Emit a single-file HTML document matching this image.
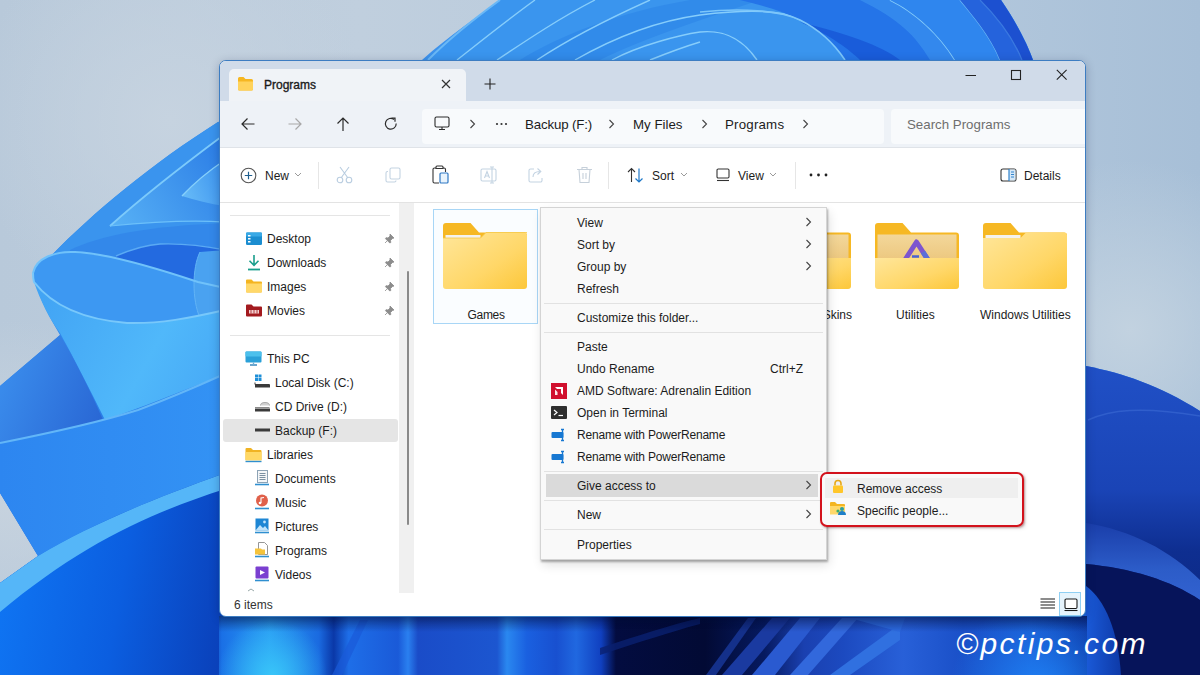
<!DOCTYPE html>
<html><head><meta charset="utf-8">
<style>
*{margin:0;padding:0;box-sizing:border-box}
html,body{width:1200px;height:675px;overflow:hidden;background:#b9cadb}
body{position:relative;font-family:"Liberation Sans",sans-serif;font-size:12px;color:#1c1c1c}
#bg{position:absolute;left:0;top:0;width:1200px;height:675px}
.b{position:absolute}
.t{position:absolute;white-space:nowrap;line-height:14px;font-size:12px}
.t13{position:absolute;white-space:nowrap;line-height:16px;font-size:13.3px}
svg.i{position:absolute;overflow:visible}
</style></head><body>
<!--BG-->
<svg id="bg" width="1200" height="675" viewBox="0 0 1200 675">
 <defs>
  <linearGradient id="gbg" x1="0" y1="0" x2="1200" y2="0" gradientUnits="userSpaceOnUse">
   <stop offset="0" stop-color="#b8c9da"/><stop offset="0.3" stop-color="#c0cfde"/><stop offset="0.8" stop-color="#b2c7dc"/><stop offset="1" stop-color="#a7bfd7"/>
  </linearGradient>
  <linearGradient id="gbase" x1="0" y1="0" x2="0" y2="675" gradientUnits="userSpaceOnUse">
   <stop offset="0" stop-color="#3f94ec"/><stop offset="0.5" stop-color="#3088ec"/><stop offset="1" stop-color="#1a5fd8"/>
  </linearGradient>
  <linearGradient id="gcupOut" x1="40" y1="300" x2="220" y2="400" gradientUnits="userSpaceOnUse">
   <stop offset="0" stop-color="#42a4f4"/><stop offset="0.6" stop-color="#50b8fa"/><stop offset="1" stop-color="#46a8f6"/>
  </linearGradient>
  <linearGradient id="gpetB" x1="0" y1="380" x2="120" y2="430" gradientUnits="userSpaceOnUse">
   <stop offset="0" stop-color="#3a8cec"/><stop offset="1" stop-color="#2660d0"/>
  </linearGradient>
  <linearGradient id="gbandC" x1="0" y1="450" x2="220" y2="450" gradientUnits="userSpaceOnUse">
   <stop offset="0" stop-color="#2d86f0"/><stop offset="1" stop-color="#3392f4"/>
  </linearGradient>
  <linearGradient id="gD" x1="0" y1="600" x2="230" y2="640" gradientUnits="userSpaceOnUse">
   <stop offset="0" stop-color="#0f74f2"/><stop offset="0.5" stop-color="#0b5ee0"/><stop offset="1" stop-color="#0a3fb8"/>
  </linearGradient>
  <linearGradient id="gright" x1="0" y1="366" x2="0" y2="675" gradientUnits="userSpaceOnUse">
   <stop offset="0" stop-color="#2050c6"/><stop offset="0.4" stop-color="#1a44b6"/><stop offset="0.6" stop-color="#0e2e90"/><stop offset="1" stop-color="#0a2478"/>
  </linearGradient>
  <linearGradient id="gbot" x1="210" y1="0" x2="1200" y2="0" gradientUnits="userSpaceOnUse">
   <stop offset="0" stop-color="#0a3ab0"/>
   <stop offset="0.012" stop-color="#1a70e6"/>
   <stop offset="0.06" stop-color="#2a9cf4"/>
   <stop offset="0.11" stop-color="#1a6ae0"/>
   <stop offset="0.125" stop-color="#0a38a8"/>
   <stop offset="0.14" stop-color="#1e6ee8"/>
   <stop offset="0.19" stop-color="#1a5ad8"/>
   <stop offset="0.2" stop-color="#2a80f0"/>
   <stop offset="0.21" stop-color="#1a4cc8"/>
   <stop offset="0.29" stop-color="#1c56d0"/>
   <stop offset="0.30" stop-color="#2a88f0"/>
   <stop offset="0.32" stop-color="#1a60e0"/>
   <stop offset="0.35" stop-color="#1850d0"/>
   <stop offset="0.37" stop-color="#2068e0"/>
   <stop offset="0.395" stop-color="#1040c0"/>
   <stop offset="0.41" stop-color="#030c40"/>
   <stop offset="0.5" stop-color="#020a34"/>
   <stop offset="0.56" stop-color="#061a60"/>
   <stop offset="0.6" stop-color="#1a40b0"/>
   <stop offset="0.64" stop-color="#1c4ac0"/>
   <stop offset="0.7" stop-color="#2860d8"/>
   <stop offset="0.76" stop-color="#1a50c8"/>
   <stop offset="0.83" stop-color="#1a55cc"/>
   <stop offset="0.88" stop-color="#0e3aa8"/>
   <stop offset="0.92" stop-color="#0a2a8a"/>
   <stop offset="1" stop-color="#0a2270"/>
  </linearGradient>
  <radialGradient id="gbotGlow" cx="272" cy="675" r="55" gradientUnits="userSpaceOnUse">
   <stop offset="0" stop-color="#38c4f8"/><stop offset="1" stop-color="#38c4f8" stop-opacity="0"/>
  </radialGradient>
  <linearGradient id="gshadow" x1="0" y1="616" x2="0" y2="632" gradientUnits="userSpaceOnUse">
   <stop offset="0" stop-color="#000830" stop-opacity="0.45"/><stop offset="1" stop-color="#000830" stop-opacity="0"/>
  </linearGradient>
  <radialGradient id="gspotR" cx="1130" cy="330" r="170" gradientUnits="userSpaceOnUse">
   <stop offset="0" stop-color="#c2d2e0"/><stop offset="1" stop-color="#c2d2e0" stop-opacity="0"/>
  </radialGradient>
  <radialGradient id="gspotL" cx="170" cy="120" r="200" gradientUnits="userSpaceOnUse">
   <stop offset="0" stop-color="#c6d3e0"/><stop offset="1" stop-color="#c6d3e0" stop-opacity="0"/>
  </radialGradient>
  <linearGradient id="gband" x1="0" y1="523" x2="0" y2="600" gradientUnits="userSpaceOnUse">
   <stop offset="0" stop-color="#1a3eaa"/><stop offset="0.6" stop-color="#2c5cc8"/><stop offset="1" stop-color="#3262d0"/>
  </linearGradient>
  <linearGradient id="gpetR" x1="1086" y1="0" x2="1121" y2="0" gradientUnits="userSpaceOnUse">
   <stop offset="0" stop-color="#1a5ad8"/><stop offset="1" stop-color="#0e3aa8"/>
  </linearGradient>
  <radialGradient id="gwmGlow" cx="1040" cy="690" r="90" gradientUnits="userSpaceOnUse">
   <stop offset="0" stop-color="#1e80f4"/><stop offset="1" stop-color="#1e80f4" stop-opacity="0"/>
  </radialGradient>
  <linearGradient id="gPa" x1="110" y1="226" x2="225" y2="150" gradientUnits="userSpaceOnUse">
   <stop offset="0" stop-color="#58b2f6"/><stop offset="1" stop-color="#2c7ee6"/>
  </linearGradient>
  <linearGradient id="gPb" x1="182" y1="196" x2="225" y2="180" gradientUnits="userSpaceOnUse">
   <stop offset="0" stop-color="#68bcf8"/><stop offset="1" stop-color="#3d94ee"/>
  </linearGradient>
  <radialGradient id="gspotLL" cx="10" cy="480" r="160" gradientUnits="userSpaceOnUse">
   <stop offset="0" stop-color="#c9d4df"/><stop offset="1" stop-color="#c9d4df" stop-opacity="0"/>
  </radialGradient>
 </defs>
 <rect width="1200" height="675" fill="url(#gbg)"/>
 <rect width="1200" height="675" fill="url(#gspotR)"/>
 <rect width="1200" height="675" fill="url(#gspotL)"/>
 <rect width="1200" height="675" fill="url(#gspotLL)"/>
 <!-- main bloom -->
 <path d="M500 0 L1001 0 C1015 20 1028 45 1033 60 L1086 366 C1122 373 1159 385 1200 411 L1200 675 L0 675 L0 583 L38 556 L0 493 L0 386 L60 335 C45 310 36 290 34 275 C38 265 44 262 47 260 C90 215 150 165 218 122 C300 90 380 75 422 60 C450 35 480 15 500 0 Z" fill="url(#gbase)"/>
 <!-- top-left petal tips -->
 <path d="M47 260 C90 215 150 165 218 122 L225 122 L225 260 Z" fill="#3a94ee"/>
 <path d="M110 226 C150 190 190 160 225 134 L225 222 C190 220 150 222 110 226 Z" fill="url(#gPa)"/>
 <path d="M110 226 C150 190 190 160 225 134" fill="none" stroke="#7ccafb" stroke-width="1.8"/>
 <path d="M110 226 C150 222 190 220 225 222" fill="none" stroke="#6cc0fa" stroke-width="1.2"/>
 <path d="M182 196 C195 182 210 170 225 160 L225 206 C210 204 195 200 182 196 Z" fill="url(#gPb)"/>
 <path d="M182 196 C195 182 210 170 225 160" fill="none" stroke="#86d0fb" stroke-width="1.4"/>
 <path d="M70 250 C100 235 150 226 225 223 L225 290 L70 290 Z" fill="#3388ea"/>
 <path d="M116 256 C130 250 145 245 160 244 C185 243 205 246 225 250 L225 290 L116 290 Z" fill="#236ae0"/>
 <path d="M116 256 C130 250 145 245 160 244 C185 243 205 246 225 250" fill="none" stroke="#5aaaf4" stroke-width="1.4"/>
 <!-- cup petal: inside -->
 <path d="M33 273 C36 258 55 251 75 252 C105 253 150 266 198 282 L225 288 L225 312 C190 319 150 324 127 323 C90 320 55 309 34 282 Z" fill="#3d98f2"/>
 <path d="M200 252 C192 268 192 300 200 318 L225 312 L225 250 Z" fill="#4aa2f0"/>
 <path d="M200 252 C192 268 192 300 200 318" fill="none" stroke="#62b4f6" stroke-width="1"/>
 <!-- cup outside -->
 <path d="M34 282 C55 309 90 320 127 323 C160 324 190 318 225 310 L225 374 C180 392 140 408 105 420 C90 390 75 360 60 333 C50 320 40 300 34 282 Z" fill="url(#gcupOut)"/>
 <path d="M33 273 C36 258 55 251 75 252 C105 253 150 266 198 282 L225 288" fill="none" stroke="#70c2fa" stroke-width="2"/>
 <path d="M33 273 C33 276 33 279 34 282 C55 309 90 320 127 323 C160 324 190 318 225 310" fill="none" stroke="#78c8fb" stroke-width="2"/>
 <!-- petal B -->
 <path d="M0 386 L60 335 C75 360 90 390 103 420 L0 443 Z" fill="url(#gpetB)"/>
 <!-- band C -->
 <path d="M0 443 C50 433 100 422 138 410 C170 398 200 385 220 376 L220 475 C150 500 90 525 38 556 L0 493 Z" fill="url(#gbandC)"/>
 <path d="M0 443 C50 433 100 422 138 410 C170 398 200 385 220 376" fill="none" stroke="#62b6f8" stroke-width="2"/>
 <!-- lower petal D -->
 <path d="M0 583 L38 556 C90 525 150 500 225 473 L225 675 L0 675 Z" fill="url(#gD)"/>
 <path d="M0 583 L38 556 C90 525 150 500 225 473 L225 489 C150 513 80 545 0 612 Z" fill="#55b6f8"/>
 <!-- top strip -->
 <path d="M427 60 C450 38 478 16 500 0 L1001 0 C1015 20 1028 45 1033 60 Z" fill="#3a95ee"/>
 <path d="M520 60 C560 35 620 12 690 0 L760 0 C700 20 640 40 600 60 Z" fill="#3088e8" opacity="0.8"/>
 <path d="M428 60 C450 38 478 16 500 0" fill="none" stroke="#6ab8f6" stroke-width="2"/>
 <path d="M457 60 C485 38 510 18 535 0 M497 60 C530 38 560 18 595 0 M537 60 C570 38 610 18 650 0" fill="none" stroke="#86cdfb" stroke-width="1.4"/>
 <path d="M575 60 C610 40 650 22 700 15 C740 10 780 8 800 20 M612 60 C640 45 680 35 700 32 C720 30 740 35 757 60 M650 60 C670 52 690 45 700 42" fill="none" stroke="#86cdfb" stroke-width="1.4"/>
 <!-- P1 to P2 region -->
 <path d="M740 0 L890 0 C915 12 940 35 955 60 L845 60 C830 40 815 28 800 20 C780 10 760 5 740 0 Z" fill="#2474e8"/>
 <path d="M800 22 C830 35 850 50 860 60 L900 60 C880 45 850 35 800 22 Z" fill="#1656d6" opacity="0.8"/>
 <path d="M890 0 C915 12 940 35 955 60 L930 60 C915 35 900 20 860 0 Z" fill="#3a92f0" opacity="0.7"/>
 <path d="M700 12 C740 8 780 10 800 20 C820 30 835 45 845 60" fill="none" stroke="#7cc6fa" stroke-width="1.6"/>
 <path d="M890 0 C915 12 940 35 955 60" fill="none" stroke="#86cdfb" stroke-width="1.6"/>
 <!-- P2 to P3 -->
 <path d="M890 0 L960 0 C972 15 990 35 1000 60 L955 60 C940 35 915 12 890 0 Z" fill="#2f86ee"/>
 <path d="M960 0 C972 15 990 35 1000 60" fill="none" stroke="#6cb8f6" stroke-width="1.3"/>
 <!-- P3 to P4 -->
 <path d="M960 0 L980 0 C995 15 1012 35 1022 60 L1000 60 C990 35 972 15 960 0 Z" fill="#2563dc"/>
 <path d="M980 0 L1001 0 C1015 20 1028 45 1033 60 L1022 60 C1012 35 995 15 980 0 Z" fill="#1c50d0"/>
 <path d="M980 0 C995 15 1012 35 1022 60" fill="none" stroke="#3a78e0" stroke-width="1.2"/>
 <!-- right side dark -->
 <path d="M1086 366 C1122 373 1159 385 1200 411 L1200 675 L1086 675 Z" fill="url(#gright)"/>
 <path d="M1088 420 C1110 410 1140 406 1200 416" fill="none" stroke="#3c6ad4" stroke-width="1.5" opacity="0.6"/>
 <path d="M1086 523 C1130 530 1170 550 1200 580 L1200 600 C1170 580 1130 568 1086 564 Z" fill="url(#gband)"/>
 <path d="M1086 564 C1130 568 1170 580 1200 600 L1200 675 L1086 675 Z" fill="#06145a"/>
 <path d="M1086 586 C1105 600 1118 630 1121 675 L1086 675 Z" fill="url(#gpetR)"/>
 <!-- bottom strip -->
 <rect x="219" y="616" width="868" height="59" fill="url(#gbot)"/>
 <rect x="200" y="600" width="150" height="75" fill="url(#gbotGlow)"/>
 <path d="M332 675 L360 620 L368 620 L342 675 Z" fill="#1a5ad8" opacity="0.7"/>
 <path d="M600 648 C640 635 670 625 700 618 L700 624 C670 632 640 642 600 655 Z" fill="#0a2070" opacity="0.8"/>
 <path d="M706 675 L748 618 L756 618 L716 675 Z" fill="#14308a"/>
 <path d="M722 675 L772 618 L790 618 L742 675 Z" fill="#1a3aa0"/>
 <path d="M752 675 L800 618 L820 618 L775 675 Z" fill="#2a5ad0"/>
 <path d="M790 675 L842 618 L858 618 L808 675 Z" fill="#3268dc"/>
 <path d="M830 675 L900 624 L900 640 L850 675 Z" fill="#3070e0"/>
 <path d="M850 618 L905 618 L900 632 Z" fill="#2c6ae0"/>
 <rect x="900" y="616" width="187" height="59" fill="url(#gwmGlow)"/>
 <rect x="219" y="616" width="868" height="16" fill="url(#gshadow)"/>
</svg>
<!--/BG-->

<!-- window frame -->
<div class="b" style="left:219px;top:60px;width:867px;height:557px;border:1px solid #3d7dc2;border-radius:7px;background:#fff;overflow:hidden;box-shadow:0 2px 10px rgba(0,20,60,0.25)">
 <div class="b" style="left:0;top:0;width:865px;height:40px;background:#d0dbe9"></div>
 <div class="b" style="left:9px;top:8px;width:237px;height:32px;background:#f0f3f7;border-radius:5px 5px 0 0"></div>
 <div class="b" style="left:0;top:40px;width:865px;height:47px;background:#eef2f7;border-bottom:1px solid #dfe3e8"></div>
 <div class="b" style="left:202px;top:48px;width:462px;height:35px;background:#f8fafc;border-radius:4px"></div>
 <div class="b" style="left:671px;top:48px;width:194px;height:35px;background:#f8fafc;border-radius:4px 0 0 4px"></div>
 <div class="b" style="left:0;top:141px;width:865px;height:1px;background:#e3e3e3"></div>
 <div class="b" style="left:179px;top:142px;width:15px;height:390px;background:#f0f0f0"></div>
 <div class="b" style="left:187px;top:210px;width:2px;height:254px;background:#8a8a8a;border-radius:1px"></div>
</div>

<!-- title bar -->
<svg class="i" style="left:237px;top:76px" width="17" height="15" viewBox="0 0 17 15">
 <path d="M1 2.5a1.5 1.5 0 0 1 1.5-1.5h4l2 2h6a1.5 1.5 0 0 1 1.5 1.5V13a1.5 1.5 0 0 1-1.5 1.5h-12A1.5 1.5 0 0 1 1 13z" fill="#f6b722"/>
 <path d="M1 5.5h15V13a1.5 1.5 0 0 1-1.5 1.5h-12A1.5 1.5 0 0 1 1 13z" fill="#ffd35c"/>
</svg>
<div class="t" style="left:264px;top:77.5px;color:#1a1a1a;-webkit-text-stroke:0.35px #1a1a1a">Programs</div>
<svg class="i" style="left:441px;top:79px" width="10" height="10"><path d="M1 1L9 9M9 1L1 9" stroke="#333" stroke-width="1.2"/></svg>
<svg class="i" style="left:484px;top:78px" width="12" height="12"><path d="M6 0.5V11.5M0.5 6H11.5" stroke="#222" stroke-width="1.1"/></svg>
<svg class="i" style="left:965px;top:70px" width="12" height="11"><path d="M0.5 5.5H11" stroke="#222" stroke-width="1"/></svg>
<svg class="i" style="left:1010px;top:69px" width="12" height="12"><rect x="1.5" y="1.5" width="9" height="9" fill="none" stroke="#222" stroke-width="1.1"/></svg>
<svg class="i" style="left:1056px;top:69px" width="12" height="12"><path d="M0.8 0.8L10.6 10.6M10.6 0.8L0.8 10.6" stroke="#222" stroke-width="1.1"/></svg>

<!-- address row -->
<svg class="i" style="left:240px;top:117px" width="16" height="14"><path d="M14.5 7H2M7.5 1.5L2 7L7.5 12.5" fill="none" stroke="#2b2b2b" stroke-width="1.2"/></svg>
<svg class="i" style="left:287px;top:117px" width="16" height="14"><path d="M1.5 7H14M8.5 1.5L14 7L8.5 12.5" fill="none" stroke="#a8a8a8" stroke-width="1.2"/></svg>
<svg class="i" style="left:336px;top:116px" width="14" height="16"><path d="M7 15V2M1.5 7.5L7 2L12.5 7.5" fill="none" stroke="#2b2b2b" stroke-width="1.2"/></svg>
<svg class="i" style="left:384px;top:117px" width="14" height="14"><path d="M12.2 6.6A5.4 5.4 0 1 1 10 2.4" fill="none" stroke="#2b2b2b" stroke-width="1.2"/><path d="M7.5 1.2H11V4.7" fill="none" stroke="#2b2b2b" stroke-width="1.2"/></svg>
<svg class="i" style="left:434px;top:116px" width="16" height="16"><rect x="1" y="1" width="14" height="10" rx="1.5" fill="none" stroke="#2b2b2b" stroke-width="1.1"/><path d="M5 13.5H11M8 11V13.5" stroke="#2b2b2b" stroke-width="1.1"/></svg>
<svg class="i" style="left:469px;top:119px" width="7" height="10"><path d="M1.5 1L5.5 5L1.5 9" fill="none" stroke="#444" stroke-width="1.1"/></svg>
<svg class="i" style="left:495px;top:122px" width="14" height="4"><circle cx="2" cy="2" r="1.1" fill="#333"/><circle cx="6.5" cy="2" r="1.1" fill="#333"/><circle cx="11" cy="2" r="1.1" fill="#333"/></svg>
<div class="t13" style="left:525px;top:116.5px;letter-spacing:-0.15px">Backup (F:)</div>
<svg class="i" style="left:608px;top:119px" width="7" height="10"><path d="M1.5 1L5.5 5L1.5 9" fill="none" stroke="#444" stroke-width="1.1"/></svg>
<div class="t13" style="left:633px;top:116.5px">My Files</div>
<svg class="i" style="left:701px;top:119px" width="7" height="10"><path d="M1.5 1L5.5 5L1.5 9" fill="none" stroke="#444" stroke-width="1.1"/></svg>
<div class="t13" style="left:725px;top:116.5px;letter-spacing:0.2px">Programs</div>
<svg class="i" style="left:802px;top:119px" width="7" height="10"><path d="M1.5 1L5.5 5L1.5 9" fill="none" stroke="#444" stroke-width="1.1"/></svg>
<div class="t13" style="left:907px;top:116.5px;color:#6e6e6e">Search Programs</div>

<!-- command bar -->
<svg class="i" style="left:240px;top:167px" width="17" height="17"><circle cx="8.5" cy="8.5" r="7.3" fill="none" stroke="#555" stroke-width="1.1"/><path d="M8.5 4.8V12.2M4.8 8.5H12.2" stroke="#1f5f8f" stroke-width="1.2"/></svg>
<div class="t" style="left:265px;top:169px">New</div>
<svg class="i" style="left:294px;top:172px" width="8" height="5"><path d="M1 1L4 4L7 1" fill="none" stroke="#9a9a9a" stroke-width="1"/></svg>
<div class="b" style="left:318px;top:162px;width:1px;height:27px;background:#e6e6e6"></div>
<!-- cut -->
<svg class="i" style="left:336px;top:166px" width="17" height="18"><path d="M4 1L12 12M13 1L5 12" stroke="#b9cde0" stroke-width="1.1" fill="none"/><circle cx="4" cy="14" r="2.8" fill="none" stroke="#b9cde0" stroke-width="1.1"/><circle cx="13" cy="14" r="2.8" fill="none" stroke="#b9cde0" stroke-width="1.1"/></svg>
<!-- copy -->
<svg class="i" style="left:385px;top:167px" width="16" height="16"><rect x="5" y="1" width="10" height="11" rx="1.5" fill="none" stroke="#c3d3e2" stroke-width="1.1"/><path d="M3 4.5H2.5A1.5 1.5 0 0 0 1 6V13.5A1.5 1.5 0 0 0 2.5 15H9.5A1.5 1.5 0 0 0 11 13.5" fill="none" stroke="#c3d3e2" stroke-width="1.1"/></svg>
<!-- paste -->
<svg class="i" style="left:432px;top:165px" width="17" height="19"><path d="M4 3H2.5A1.5 1.5 0 0 0 1 4.5V16.5A1.5 1.5 0 0 0 2.5 18H7" fill="none" stroke="#333" stroke-width="1.1"/><path d="M4 3.5V2A1 1 0 0 1 5 1H10A1 1 0 0 1 11 2V3.5H4Z" fill="none" stroke="#333" stroke-width="1.1"/><path d="M11 3H12A1.5 1.5 0 0 1 13.5 4.5V7" fill="none" stroke="#333" stroke-width="1.1"/><rect x="8" y="8" width="8" height="10" rx="1" fill="#e8f3fc" stroke="#2f78c4" stroke-width="1.2"/></svg>
<!-- rename -->
<svg class="i" style="left:480px;top:166px" width="18" height="18"><rect x="1" y="3" width="15" height="12" rx="1.5" fill="none" stroke="#c3d3e2" stroke-width="1.1"/><path d="M4.5 12L7 5.5L9.5 12M5.3 10H8.7" fill="none" stroke="#c3d3e2" stroke-width="1.1"/><path d="M12 1V17M10 1H14M10 17H14" fill="none" stroke="#c3d3e2" stroke-width="1.1"/></svg>
<!-- share -->
<svg class="i" style="left:528px;top:166px" width="17" height="17"><path d="M6 3H2.5A1.5 1.5 0 0 0 1 4.5V14.5A1.5 1.5 0 0 0 2.5 16H12.5A1.5 1.5 0 0 0 14 14.5V12" fill="none" stroke="#c3d3e2" stroke-width="1.1"/><path d="M5 11C5 7 8 5.5 12 5.5M9.5 2.5L12.8 5.5L9.5 8.5" fill="none" stroke="#c3d3e2" stroke-width="1.1"/></svg>
<!-- delete -->
<svg class="i" style="left:576px;top:166px" width="17" height="18"><path d="M1 3.5H16M6 3.5V1.5H11V3.5M3 3.5L4 16.5H13L14 3.5M7 7V13M10 7V13" fill="none" stroke="#c6d0da" stroke-width="1.1"/></svg>
<div class="b" style="left:608px;top:162px;width:1px;height:27px;background:#e6e6e6"></div>
<!-- sort -->
<svg class="i" style="left:627px;top:167px" width="17" height="17"><path d="M4.5 15V1.5M1 5L4.5 1.5L8 5" fill="none" stroke="#333" stroke-width="1.1"/><path d="M12 1.5V15M8.5 11.5L12 15L15.5 11.5" fill="none" stroke="#1e78c8" stroke-width="1.2"/></svg>
<div class="t" style="left:652px;top:169px">Sort</div>
<svg class="i" style="left:680px;top:172px" width="8" height="5"><path d="M1 1L4 4L7 1" fill="none" stroke="#9a9a9a" stroke-width="1"/></svg>
<!-- view -->
<svg class="i" style="left:716px;top:168px" width="14" height="14"><rect x="1" y="1" width="12" height="9" rx="1.2" fill="none" stroke="#333" stroke-width="1.1"/><path d="M1 12.5H13" stroke="#333" stroke-width="1.1"/></svg>
<div class="t" style="left:738px;top:169px">View</div>
<svg class="i" style="left:769px;top:172px" width="8" height="5"><path d="M1 1L4 4L7 1" fill="none" stroke="#9a9a9a" stroke-width="1"/></svg>
<div class="b" style="left:795px;top:162px;width:1px;height:27px;background:#e6e6e6"></div>
<svg class="i" style="left:809px;top:173px" width="19" height="4"><circle cx="2" cy="2" r="1.4" fill="#222"/><circle cx="9.5" cy="2" r="1.4" fill="#222"/><circle cx="17" cy="2" r="1.4" fill="#222"/></svg>
<svg class="i" style="left:1000px;top:168px" width="17" height="14"><rect x="1" y="1" width="15" height="12" rx="2" fill="none" stroke="#333" stroke-width="1.1"/><rect x="9" y="1.6" width="6.4" height="10.8" fill="#d5e8f8"/><path d="M9 1V13" stroke="#1e78c8" stroke-width="1.1"/><path d="M11 4H14M11 6.5H14M11 9H14" stroke="#1e78c8" stroke-width="0.9"/></svg>
<div class="t" style="left:1024px;top:169px">Details</div>


<!-- sidebar -->
<div class="b" style="left:230px;top:215px;width:160px;height:1px;background:#e5e5e5"></div>
<div class="b" style="left:230px;top:335px;width:160px;height:1px;background:#e5e5e5"></div>
<div class="b" style="left:223px;top:419px;width:175px;height:23px;background:#e5e5e5;border-radius:3px"></div>
<!-- desktop -->
<svg class="i" style="left:246px;top:232px" width="16" height="14"><rect x="0" y="0.5" width="16" height="12.5" rx="1.2" fill="#1b8dd0"/><rect x="0" y="0.5" width="16" height="4" rx="1" fill="#39a9e6"/><rect x="2" y="3" width="2.5" height="1.5" fill="#fff"/><rect x="2" y="6" width="2.5" height="1.5" fill="#fff"/><rect x="2" y="9" width="2.5" height="1.5" fill="#fff"/></svg>
<div class="t" style="left:267px;top:231.5px">Desktop</div>
<!-- downloads -->
<svg class="i" style="left:247px;top:254px" width="14" height="17"><path d="M7 1V11M2.5 6.8L7 11.3L11.5 6.8" fill="none" stroke="#199e8c" stroke-width="1.6"/><path d="M1 15.5H13" stroke="#199e8c" stroke-width="1.8"/></svg>
<div class="t" style="left:267px;top:255.5px">Downloads</div>
<!-- images -->
<svg class="i" style="left:246px;top:279px" width="16" height="14"><path d="M0 1.5A1 1 0 0 1 1 0.5H5.5L7.5 2.5H15A1 1 0 0 1 16 3.5V12.5A1 1 0 0 1 15 13.5H1A1 1 0 0 1 0 12.5Z" fill="#f4b521"/><path d="M0 4.5H16V12.5A1 1 0 0 1 15 13.5H1A1 1 0 0 1 0 12.5Z" fill="#ffd86a"/></svg>
<div class="t" style="left:267px;top:279.5px">Images</div>
<!-- movies -->
<svg class="i" style="left:246px;top:304px" width="16" height="13"><path d="M0 1.5A1 1 0 0 1 1 0.5H5.5L7.5 2.5H15A1 1 0 0 1 16 3.5V11.5A1 1 0 0 1 15 12.5H1A1 1 0 0 1 0 11.5Z" fill="#a31a1f"/><rect x="3" y="6" width="10" height="3.5" fill="#f3d0d0"/><path d="M5 6V9.5M8 6V9.5M11 6V9.5" stroke="#a31a1f" stroke-width="0.8"/></svg>
<div class="t" style="left:267px;top:303.5px">Movies</div>
<!-- pins -->
<svg class="i" style="left:384px;top:233px" width="11" height="11"><path d="M6 1L10 5L8.5 5.5L6.5 7.5L6.8 9.5L5.8 10L1.5 5.7L2 4.7L4 5L6 3Z M3.5 7.5L1 10" fill="#8c8c8c" stroke="#8c8c8c" stroke-width="0.8"/></svg>
<svg class="i" style="left:384px;top:257px" width="11" height="11"><path d="M6 1L10 5L8.5 5.5L6.5 7.5L6.8 9.5L5.8 10L1.5 5.7L2 4.7L4 5L6 3Z M3.5 7.5L1 10" fill="#8c8c8c" stroke="#8c8c8c" stroke-width="0.8"/></svg>
<svg class="i" style="left:384px;top:281px" width="11" height="11"><path d="M6 1L10 5L8.5 5.5L6.5 7.5L6.8 9.5L5.8 10L1.5 5.7L2 4.7L4 5L6 3Z M3.5 7.5L1 10" fill="#8c8c8c" stroke="#8c8c8c" stroke-width="0.8"/></svg>
<svg class="i" style="left:384px;top:305px" width="11" height="11"><path d="M6 1L10 5L8.5 5.5L6.5 7.5L6.8 9.5L5.8 10L1.5 5.7L2 4.7L4 5L6 3Z M3.5 7.5L1 10" fill="#8c8c8c" stroke="#8c8c8c" stroke-width="0.8"/></svg>
<!-- this pc -->
<svg class="i" style="left:245px;top:351px" width="17" height="15"><rect x="0.5" y="0.5" width="16" height="11" rx="1" fill="#2aa0d8"/><rect x="0.5" y="0.5" width="16" height="5" rx="1" fill="#4cc0ec"/><path d="M5 14H12" stroke="#2c7fb8" stroke-width="1.4"/><path d="M8.5 11.5V14" stroke="#6aaed6" stroke-width="1.4"/></svg>
<div class="t" style="left:267px;top:351.5px">This PC</div>
<!-- local disk -->
<svg class="i" style="left:254px;top:374px" width="16" height="14"><rect x="1" y="0.5" width="3" height="3" fill="#1e8fd8"/><rect x="4.5" y="0.5" width="3" height="3" fill="#1e8fd8"/><rect x="1" y="4" width="3" height="3" fill="#1e8fd8"/><rect x="4.5" y="4" width="3" height="3" fill="#1e8fd8"/><path d="M1 8.5V10.5H15.5" fill="none" stroke="#3a3a3a" stroke-width="1"/><rect x="1" y="10.5" width="15" height="3" fill="#3a3a3a"/></svg>
<div class="t" style="left:275px;top:375.5px">Local Disk (C:)</div>
<!-- cd -->
<svg class="i" style="left:254px;top:398px" width="16" height="14"><path d="M6.5 7.5A4.5 3 0 0 1 15.5 7.5" fill="#d0d0d0" stroke="#9a9a9a" stroke-width="0.8"/><path d="M1 9.5H15.5" stroke="#8a8a8a" stroke-width="1"/><rect x="1" y="10.5" width="15" height="3" fill="#3a3a3a"/></svg>
<div class="t" style="left:275px;top:399.5px">CD Drive (D:)</div>
<!-- backup -->
<svg class="i" style="left:254px;top:426px" width="16" height="8"><rect x="1" y="2.5" width="15" height="3" fill="#3a3a3a"/></svg>
<div class="t" style="left:275px;top:423.5px">Backup (F:)</div>
<!-- libraries -->
<svg class="i" style="left:245px;top:447px" width="17" height="16"><path d="M0.5 2A1 1 0 0 1 1.5 1H6L8 3H15.5A1 1 0 0 1 16.5 4V13H0.5Z" fill="#f0b323"/><path d="M0.5 5H16.5V13.5H0.5Z" fill="#ffd865"/><path d="M0.5 14.5H16.5" stroke="#2f8fd0" stroke-width="1.4"/></svg>
<div class="t" style="left:267px;top:447.5px">Libraries</div>
<!-- documents -->
<svg class="i" style="left:254px;top:470px" width="16" height="16"><rect x="3.5" y="0.5" width="10" height="12" fill="#f4f6f8" stroke="#8da3b5" stroke-width="1"/><path d="M5.5 3.5H11.5M5.5 5.5H11.5M5.5 7.5H11.5M5.5 9.5H11.5" stroke="#6d8496" stroke-width="0.9"/><path d="M1 14.5H15" stroke="#2f8fd0" stroke-width="1.6"/></svg>
<div class="t" style="left:275px;top:471.5px">Documents</div>
<!-- music -->
<svg class="i" style="left:254px;top:494px" width="16" height="16"><circle cx="8" cy="6.5" r="6" fill="#e0604a"/><path d="M7 9V4L10 3.5" fill="none" stroke="#fff" stroke-width="1.1"/><circle cx="6" cy="9" r="1.3" fill="#fff"/><path d="M1 14.5H15" stroke="#2f8fd0" stroke-width="1.6"/></svg>
<div class="t" style="left:275px;top:495.5px">Music</div>
<!-- pictures -->
<svg class="i" style="left:254px;top:518px" width="16" height="16"><rect x="1.5" y="0.5" width="13" height="12" fill="#1d86d4"/><path d="M1.5 12.5L6 7L9 10L11 8L14.5 12.5Z" fill="#bfe3fb"/><circle cx="10.5" cy="4" r="1.4" fill="#bfe3fb"/><path d="M1 14.5H15" stroke="#2f8fd0" stroke-width="1.6"/></svg>
<div class="t" style="left:275px;top:519.5px">Pictures</div>
<!-- programs -->
<svg class="i" style="left:254px;top:542px" width="16" height="16"><path d="M4.5 0.5H10.5L13.5 3.5V12.5H4.5Z" fill="#fff" stroke="#8a8a8a" stroke-width="0.9"/><path d="M1 6.5H7L8 7.5H11V12.5H1Z" fill="#f5c33b"/><path d="M1 14.5H15" stroke="#2f8fd0" stroke-width="1.6"/></svg>
<div class="t" style="left:275px;top:543.5px">Programs</div>
<!-- videos -->
<svg class="i" style="left:254px;top:566px" width="16" height="16"><rect x="1.5" y="0.5" width="13" height="12" rx="1" fill="#7a3fd0"/><path d="M6 4L11 6.5L6 9Z" fill="#fff"/><path d="M1 14.5H15" stroke="#2f8fd0" stroke-width="1.6"/></svg>
<div class="t" style="left:275px;top:567.5px">Videos</div>
<svg class="i" style="left:247px;top:588px" width="8" height="4"><path d="M1 3L4 1L7 3" fill="none" stroke="#9aa" stroke-width="1"/></svg>
<!-- status -->
<div class="t" style="left:234px;top:597.5px;color:#333">6 items</div>
<svg class="i" style="left:1040px;top:598px" width="16" height="12"><path d="M0.5 1H15M0.5 4H15M0.5 7H15M0.5 10H15" stroke="#1a1a1a" stroke-width="1.1"/></svg>
<div class="b" style="left:1059px;top:592px;width:22px;height:24px;border:1px solid #8fcff3;background:#e6f4fd"></div>
<svg class="i" style="left:1064px;top:598px" width="14" height="14"><rect x="1" y="1" width="12" height="9.5" rx="1.2" fill="#fff" stroke="#1a1a1a" stroke-width="1.1"/><path d="M0.5 12.5H13.5" stroke="#1a1a1a" stroke-width="1.1"/></svg>

<!-- content -->
<div class="b" style="left:433px;top:209px;width:105px;height:115px;border:1px solid #a8d6f6;background:#fafdff"></div>
<svg width="0" height="0" style="position:absolute">
 <defs>
  <linearGradient id="fold" x1="0" y1="0" x2="1" y2="1">
   <stop offset="0" stop-color="#ffe69a"/><stop offset="0.6" stop-color="#ffd768"/><stop offset="1" stop-color="#fcc73a"/>
  </linearGradient>
  <linearGradient id="inside" x1="0" y1="0" x2="0" y2="1">
   <stop offset="0" stop-color="#f3d79a"/><stop offset="1" stop-color="#ebc57a"/>
  </linearGradient>
 </defs>
</svg>
<svg class="i" style="left:443px;top:223px" width="84" height="67" viewBox="0 0 84 67">
 <path d="M0 3A3 3 0 0 1 3 0H27.5L36 9.5H81A3 3 0 0 1 84 12.5V20H0Z" fill="#f6b824"/>
 <rect x="2.5" y="12" width="35" height="4" fill="#f4f2ee"/>
 <path d="M0 15H37.5L43 9.5H81A3 3 0 0 1 84 12.5V63A3 3 0 0 1 81 66H3A3 3 0 0 1 0 63Z" fill="url(#fold)"/>
 <path d="M0 15H37.5L43 9.5H84" fill="none" stroke="#f6c844" stroke-width="0.8"/>
</svg>
<div class="t" style="left:467.5px;top:307.5px;letter-spacing:-0.3px">Games</div>
<!-- skins (partly hidden) -->
<svg class="i" style="left:767px;top:223px" width="84" height="67" viewBox="0 0 84 67">
 <path d="M0 3A3 3 0 0 1 3 0H27.5L36 9.5H81A3 3 0 0 1 84 12.5V60H0Z" fill="#f6b824"/>
 <rect x="2.5" y="11.5" width="79" height="30" fill="url(#inside)"/>
 <path d="M0 35H84V63A3 3 0 0 1 81 66H3A3 3 0 0 1 0 63Z" fill="url(#fold)"/>
</svg>
<div class="t" style="left:764px;top:307.5px">Rainmeter Skins</div>
<!-- utilities -->
<svg class="i" style="left:875px;top:223px" width="84" height="67" viewBox="0 0 84 67">
 <path d="M0 3A3 3 0 0 1 3 0H27.5L36 9.5H81A3 3 0 0 1 84 12.5V60H0Z" fill="#f6b824"/>
 <rect x="2.5" y="11.5" width="79" height="30" fill="url(#inside)"/>
 <path d="M28 40L41.5 19L55 40" fill="none" stroke="#7d55cf" stroke-width="5" stroke-linejoin="round"/>
 <path d="M48 29L55 40" fill="none" stroke="#5a6ed8" stroke-width="5"/>
 <path d="M37 33.5H44" stroke="#4a62d0" stroke-width="2.5"/>
 <path d="M0 35H84V63A3 3 0 0 1 81 66H3A3 3 0 0 1 0 63Z" fill="url(#fold)"/>
</svg>
<div class="t" style="left:896px;top:307.5px">Utilities</div>
<!-- windows utilities -->
<svg class="i" style="left:983px;top:223px" width="84" height="67" viewBox="0 0 84 67">
 <path d="M0 3A3 3 0 0 1 3 0H27.5L36 9.5H81A3 3 0 0 1 84 12.5V20H0Z" fill="#f6b824"/>
 <rect x="2.5" y="12" width="35" height="4" fill="#f4f2ee"/>
 <path d="M0 15H37.5L43 9.5H81A3 3 0 0 1 84 12.5V63A3 3 0 0 1 81 66H3A3 3 0 0 1 0 63Z" fill="url(#fold)"/>
</svg>
<div class="t" style="left:980px;top:307.5px">Windows Utilities</div>

<!-- context menu -->
<div class="b" style="left:540px;top:207px;width:287px;height:353px;background:#f9f9f9;border:1px solid #d4d4d4;box-shadow:1px 2px 2px rgba(0,0,0,0.3),2px 5px 10px rgba(0,0,0,0.12)"></div>
<div class="b" style="left:544px;top:303px;width:279px;height:1px;background:#e2e2e2"></div>
<div class="b" style="left:544px;top:332px;width:279px;height:1px;background:#e2e2e2"></div>
<div class="b" style="left:544px;top:471px;width:279px;height:1px;background:#e2e2e2"></div>
<div class="b" style="left:544px;top:500px;width:279px;height:1px;background:#e2e2e2"></div>
<div class="b" style="left:544px;top:529px;width:279px;height:1px;background:#e2e2e2"></div>
<div class="b" style="left:546px;top:474px;width:272px;height:23px;background:#dadada"></div>
<div class="t" style="left:577px;top:215.5px">View</div>
<div class="t" style="left:577px;top:237.5px">Sort by</div>
<div class="t" style="left:577px;top:259.5px">Group by</div>
<div class="t" style="left:577px;top:281.5px">Refresh</div>
<div class="t" style="left:577px;top:310.5px">Customize this folder...</div>
<div class="t" style="left:577px;top:339.5px">Paste</div>
<div class="t" style="left:577px;top:361.5px">Undo Rename</div>
<div class="t" style="left:770px;top:361.5px">Ctrl+Z</div>
<div class="t" style="left:577px;top:383.5px">AMD Software: Adrenalin Edition</div>
<div class="t" style="left:577px;top:405.5px">Open in Terminal</div>
<div class="t" style="left:577px;top:427.5px;letter-spacing:-0.2px">Rename with PowerRename</div>
<div class="t" style="left:577px;top:449.5px;letter-spacing:-0.2px">Rename with PowerRename</div>
<div class="t" style="left:577px;top:479px">Give access to</div>
<div class="t" style="left:577px;top:508px">New</div>
<div class="t" style="left:577px;top:537.5px">Properties</div>
<svg class="i" style="left:805px;top:217px" width="7" height="10"><path d="M1.5 1L5.5 5L1.5 9" fill="none" stroke="#444" stroke-width="1.1"/></svg>
<svg class="i" style="left:805px;top:239px" width="7" height="10"><path d="M1.5 1L5.5 5L1.5 9" fill="none" stroke="#444" stroke-width="1.1"/></svg>
<svg class="i" style="left:805px;top:261px" width="7" height="10"><path d="M1.5 1L5.5 5L1.5 9" fill="none" stroke="#444" stroke-width="1.1"/></svg>
<svg class="i" style="left:805px;top:480px" width="7" height="10"><path d="M1.5 1L5.5 5L1.5 9" fill="none" stroke="#444" stroke-width="1.1"/></svg>
<svg class="i" style="left:805px;top:509px" width="7" height="10"><path d="M1.5 1L5.5 5L1.5 9" fill="none" stroke="#444" stroke-width="1.1"/></svg>
<!-- menu icons -->
<svg class="i" style="left:551px;top:383px" width="16" height="16"><rect width="16" height="16" fill="#d1102e"/><path d="M4 4H12V12L10 10V6H6Z" fill="#fff"/><path d="M4 6.5L6.5 9V12H4Z" fill="#fff" opacity="0.9"/></svg>
<svg class="i" style="left:551px;top:406px" width="16" height="13"><rect width="16" height="13" rx="1" fill="#2f2f2f"/><path d="M3 4L6 6.5L3 9" fill="none" stroke="#fff" stroke-width="1.2"/><path d="M7.5 9.5H12" stroke="#fff" stroke-width="1.2"/></svg>
<svg class="i" style="left:551px;top:428px" width="15" height="14"><rect x="0.5" y="4" width="12" height="6" rx="1" fill="#1778d2"/><path d="M10 1.5H13M11.5 1.5V12.5M10 12.5H13" fill="none" stroke="#1778d2" stroke-width="1.3"/></svg>
<svg class="i" style="left:551px;top:450px" width="15" height="14"><rect x="0.5" y="4" width="12" height="6" rx="1" fill="#1778d2"/><path d="M10 1.5H13M11.5 1.5V12.5M10 12.5H13" fill="none" stroke="#1778d2" stroke-width="1.3"/></svg>

<!-- submenu -->
<div class="b" style="left:822px;top:474px;width:200px;height:51px;background:#f9f9f9;box-shadow:2px 2px 4px rgba(0,0,0,0.25)"></div>
<div class="b" style="left:825px;top:478px;width:193px;height:20px;background:#efefef"></div>
<svg class="i" style="left:831px;top:479px" width="14" height="15"><path d="M4 6.5V4.5A3 3 0 0 1 10 4.5V6.5" fill="none" stroke="#e7a817" stroke-width="1.6"/><rect x="2" y="6.5" width="10" height="7.5" rx="1" fill="#ffc629"/></svg>
<div class="t" style="left:857px;top:481.5px">Remove access</div>
<svg class="i" style="left:829px;top:501px" width="18" height="16"><path d="M1 2A1 1 0 0 1 2 1H6L8 3H15A1 1 0 0 1 16 4V13H1Z" fill="#f4b521"/><path d="M1 5H16V13.5H1Z" fill="#ffd86a"/><circle cx="13" cy="8" r="2" fill="#2aa0a0"/><path d="M9 14C9 11 11 10 13 10C15 10 17 11 17 14Z" fill="#1e7fc8"/><circle cx="9" cy="10" r="1.6" fill="#3fae6a"/></svg>
<div class="t" style="left:857px;top:503.5px">Specific people...</div>
<div class="b" style="left:820px;top:472px;width:204px;height:55px;border:2.5px solid #d3121c;border-radius:7px;box-shadow:1px 1px 2px rgba(120,0,0,0.3)"></div>

<div class="b" style="left:956px;top:624px;font-size:30px;line-height:40px;color:#fff;font-style:italic;letter-spacing:2.4px;white-space:nowrap">©pctips.com</div>
</body></html>
